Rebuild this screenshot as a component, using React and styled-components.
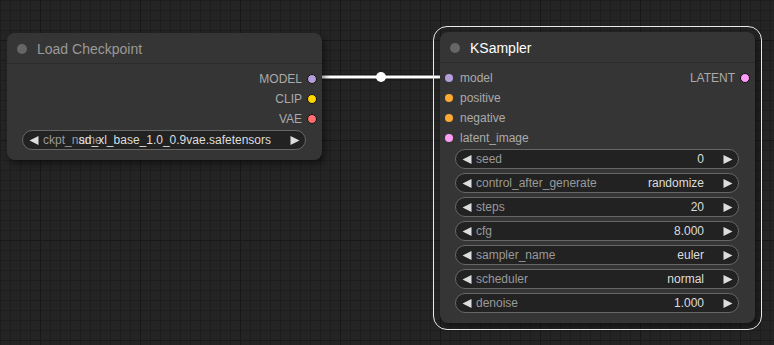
import React from "react";
import styled, { createGlobalStyle, css } from "styled-components";

const Global = createGlobalStyle`
  * { box-sizing: border-box; }
  html, body { margin: 0; padding: 0; background: #232323; }
  body { font-family: "Liberation Sans", Arial, sans-serif; }
`;

const Canvas = styled.div`
  position: relative;
  width: 774px;
  height: 345px;
  overflow: hidden;
  background-color: #242424;
  background-image:
    linear-gradient(to right, #181818 1px, transparent 1px),
    linear-gradient(to bottom, #181818 1px, transparent 1px),
    linear-gradient(to right, #1d1d1d 1px, transparent 1px),
    linear-gradient(to bottom, #1d1d1d 1px, transparent 1px);
  background-size: 100px 100px, 100px 100px, 10px 10px, 10px 10px;
  background-position: 40px 0, 0 40px, 0 0, 0 0;
`;

const Links = styled.svg`
  position: absolute;
  left: 0;
  top: 0;
  width: 774px;
  height: 345px;
  z-index: 0;
`;

const Node = styled.div`
  position: absolute;
  left: ${(p) => p.$x}px;
  top: ${(p) => p.$y}px;
  width: 315px;
  z-index: 1;
  background: #353535;
  border-radius: 8px;
  box-shadow: 3px 4px 6px rgba(0, 0, 0, 0.45);
  ${(p) =>
    p.$selected &&
    css`
      &::before {
        content: "";
        position: absolute;
        left: -7px;
        right: -7px;
        top: -6px;
        bottom: -7px;
        border: 1px solid #e8e8e8;
        border-radius: 14px;
        pointer-events: none;
      }
    `}
`;

const Title = styled.div`
  height: 31px;
  display: flex;
  align-items: center;
  gap: 10px;
  padding: 2px 0 0 10px;
  border-bottom: 1px solid #2b2b2b;
  font-size: 14px;
  color: ${(p) => (p.$selected ? "#ffffff" : "#999999")};
`;

const TitleDot = styled.span`
  width: 10px;
  height: 10px;
  border-radius: 50%;
  background: #666;
`;

const Body = styled.div`
  padding: 5px 0 10px;
`;

const SlotRow = styled.div`
  height: 20px;
  display: flex;
  align-items: center;
  justify-content: space-between;
  padding: 0 5px;
  font-size: 12px;
  color: #aaaaaa;
`;

const Slot = styled.div`
  display: flex;
  align-items: center;
  gap: ${(p) => (p.$out ? 5 : 7)}px;
`;

const Dot = styled.span`
  width: ${(p) => (p.$out ? 10 : 8)}px;
  height: ${(p) => (p.$out ? 10 : 8)}px;
  border-radius: 50%;
  background: ${(p) => p.$color};
  border: ${(p) => (p.$out ? "1px solid #111" : "none")};
`;

const Widgets = styled.div`
  display: flex;
  flex-direction: column;
  gap: 4px;
  margin-top: 1px;
  padding: 0 16px 0 15px;
`;

const Widget = styled.div`
  height: 20px;
  display: flex;
  align-items: center;
  padding: 0 5px 0 6px;
  background: #222;
  border: 1px solid #666;
  border-radius: 10px;
  font-size: 12px;
`;

const Arrow = styled.svg`
  flex: none;
  width: 10px;
  height: 9px;
`;

const Label = styled.span`
  flex: 1 1 0;
  min-width: 0;
  margin-left: 4px;
  white-space: nowrap;
  color: #999;
`;

const Value = styled.span`
  flex: none;
  margin-right: 19px;
  white-space: nowrap;
  color: #dddddd;
`;

const LeftArrow = () => (
  <Arrow viewBox="0 0 10 9">
    <path d="M0.5 4.5 L9.5 0 L9.5 9 Z" fill="#ddd" />
  </Arrow>
);

const RightArrow = () => (
  <Arrow viewBox="0 0 10 9">
    <path d="M9.5 4.5 L0.5 0 L0.5 9 Z" fill="#ddd" />
  </Arrow>
);

const Combo = ({ label, value }) => (
  <Widget>
    <LeftArrow />
    <Label>{label}</Label>
    <Value>{value}</Value>
    <RightArrow />
  </Widget>
);

const COLORS = {
  MODEL: "#b39ddb",
  CLIP: "#ffd500",
  VAE: "#ff6e6e",
  CONDITIONING: "#ffa931",
  LATENT: "#ff9cf9",
};

const ksamplerWidgets = [
  ["seed", "0"],
  ["control_after_generate", "randomize"],
  ["steps", "20"],
  ["cfg", "8.000"],
  ["sampler_name", "euler"],
  ["scheduler", "normal"],
  ["denoise", "1.000"],
];

const ksamplerInputs = [
  ["model", COLORS.MODEL],
  ["positive", COLORS.CONDITIONING],
  ["negative", COLORS.CONDITIONING],
  ["latent_image", COLORS.LATENT],
];

export default function App() {
  return (
    <Canvas>
      <Global />
      <Links>
        <line x1="312" y1="77" x2="449" y2="77" stroke="rgba(0,0,0,0.5)" strokeWidth="5" />
        <line x1="312" y1="77" x2="449" y2="77" stroke="#ffffff" strokeWidth="3" />
        <circle cx="381" cy="77" r="5" fill="#ffffff" />
      </Links>

      <Node $x={7} $y={33}>
        <Title>
          <TitleDot />
          Load Checkpoint
        </Title>
        <Body>
          {["MODEL", "CLIP", "VAE"].map((name) => (
            <SlotRow key={name}>
              <span />
              <Slot $out>
                {name}
                <Dot $out $color={COLORS[name]} />
              </Slot>
            </SlotRow>
          ))}
          <Widgets>
            <Combo label="ckpt_name" value="sd_xl_base_1.0_0.9vae.safetensors" />
          </Widgets>
        </Body>
      </Node>

      <Node $x={440} $y={32} $selected>
        <Title $selected>
          <TitleDot />
          KSampler
        </Title>
        <Body>
          {ksamplerInputs.map(([name, color], i) => (
            <SlotRow key={name}>
              <Slot>
                <Dot $color={color} />
                {name}
              </Slot>
              {i === 0 && (
                <Slot $out>
                  LATENT
                  <Dot $out $color={COLORS.LATENT} />
                </Slot>
              )}
            </SlotRow>
          ))}
          <Widgets>
            {ksamplerWidgets.map(([label, value]) => (
              <Combo key={label} label={label} value={value} />
            ))}
          </Widgets>
        </Body>
      </Node>
    </Canvas>
  );
}
